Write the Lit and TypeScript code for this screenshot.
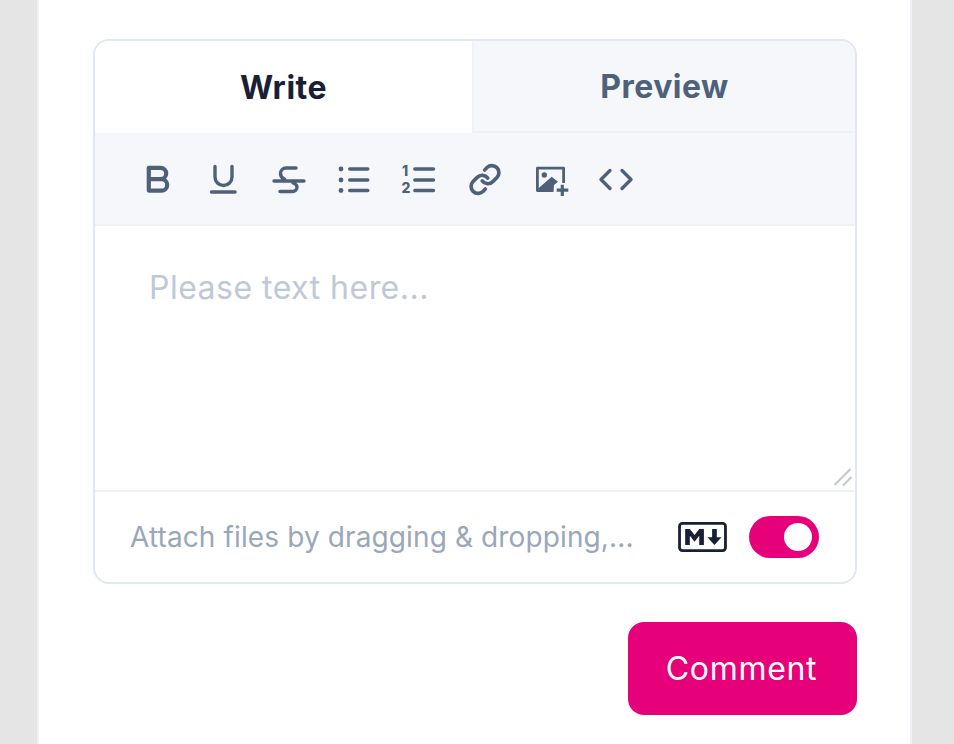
import { LitElement, html, css } from "lit";
import { customElement } from "lit/decorators.js";

@customElement("app-root")
export class AppRoot extends LitElement {
  static styles = css`
    :host { display: block; height: 744px; overflow: hidden; background: #e5e5e5; font-family: Inter, "Liberation Sans", sans-serif; }
    * { box-sizing: border-box; }
    .page { width: 875px; height: 744px; margin-left: 37px; background: #fff; border-left: 2px solid #edf2f7; border-right: 2px solid #edf2f7; padding: 39px 53px 0 54px; }
    .card { height: 545px; border: 2px solid #e2e8f0; border-radius: 16px; overflow: hidden; display: flex; flex-direction: column; }
    .tabs { display: flex; height: 92px; flex: none; }
    .tab { display: flex; align-items: center; justify-content: center; font-size: 32px; font-weight: 700; }
    .write { width: 377px; color: #1a1f36; background: #fff; letter-spacing: 0.5px; }
    .preview { flex: 1; color: #4f6179; background: #f5f7fb; border-left: 2px solid #edf2f7; border-bottom: 2px solid #edf2f7; letter-spacing: 0.45px; }
    .toolbar { height: 93px; flex: none; background: #f5f7fb; border-bottom: 2px solid #edf2f7; display: flex; align-items: center; gap: 25.5px; padding: 3px 0 0 42px; }
    .toolbar svg { width: 40px; height: 40px; flex: none; fill: none; stroke: #4f6179; stroke-width: 3.4; stroke-linecap: round; stroke-linejoin: round; }
    .toolbar .solid { fill: #4f6179; stroke: none; }
    .num { font-size: 14px; font-weight: 800; fill: #4f6179; stroke: none; }
    .editor { position: relative; flex: 1; border-bottom: 2px solid #edf2f7; }
    textarea { display: block; width: 100%; height: 100%; border: 0; outline: 0; resize: none; padding: 43px 54px; font: 400 32px/38px Inter, "Liberation Sans", sans-serif; letter-spacing: 0.48px; background: #fff; }
    textarea::placeholder { color: #c0c8d6; opacity: 1; }
    .grip { position: absolute; right: 0; bottom: 2px; width: 24px; height: 22px; }
    .grip path { stroke: #c0c8d6; stroke-width: 2; fill: none; }
    .footer { height: 90px; flex: none; display: flex; align-items: center; padding: 0 36px 0 35px; }
    .hint { flex: 1; font-size: 28px; color: #9aa7b9; white-space: nowrap; letter-spacing: 0.12px; }
    .md { width: 49px; height: 30px; flex: none; margin-right: 22px; }
    .toggle { width: 70px; height: 42px; flex: none; border-radius: 21px; background: #e6007a; display: flex; align-items: center; justify-content: flex-end; padding-right: 7px; }
    .knob { width: 28px; height: 28px; border-radius: 50%; background: #fff; }
    .actions { display: flex; justify-content: flex-end; margin-top: 38px; }
    button { width: 229px; height: 93px; border: 0; border-radius: 16px; padding: 0 2px 0 0; background: #e6007a; color: #fff; font: 400 32px Inter, "Liberation Sans", sans-serif; letter-spacing: 0.7px; }
  `;

  render() {
    return html`
      <div class="page">
        <div class="card">
          <div class="tabs">
            <div class="tab write">Write</div>
            <div class="tab preview">Preview</div>
          </div>
          <div class="toolbar">
            <svg viewBox="0 0 40 40"><path d="M11.8 7.8h11.7a5.6 5.6 0 0 1 0 11.4H11.8zM11.8 19.2h12.7a5.7 5.7 0 0 1 0 11.4H11.8z" stroke-width="4.2"/></svg>
            <svg viewBox="0 0 40 40"><path d="M12 6.5V17a8.5 8.5 0 0 0 17 0V6.5M8.5 32H32"/></svg>
            <svg viewBox="0 0 40 40"><path d="M6 21H36M28 8H18a5.5 5.5 0 0 0-5.5 5.5c0 2.5 1.5 4.5 4 5.5M25 23c2.2.7 4 2 4 4a4.5 4.5 0 0 1-4.5 4.5H12"/></svg>
            <svg viewBox="0 0 40 40"><path d="M15.7 9H33.8M15.7 20H33.8M15.7 30.5H33.8"/><circle class="solid" cx="7" cy="9" r="2.4"/><circle class="solid" cx="7" cy="20" r="2.4"/><circle class="solid" cx="7" cy="30.5" r="2.4"/></svg>
            <svg viewBox="0 0 40 40"><path d="M15.8 9H34.5M15.8 20H34.5M15.8 30.5H34.5"/><text class="num" x="3" y="16">1</text><text class="num" x="2.5" y="33">2</text></svg>
            <svg viewBox="0 0 40 40"><g transform="translate(3.2 2.7) scale(1.4)" stroke-width="2.6"><path d="M10 13a5 5 0 0 0 7.54.54l3-3a5 5 0 0 0-7.07-7.07l-1.72 1.71"/><path d="M14 11a5 5 0 0 0-7.54-.54l-3 3a5 5 0 0 0 7.07 7.07l1.71-1.71"/></g></svg>
            <svg viewBox="0 0 40 40"><path d="M33.6 23V8.2H7.4V30.6H23" stroke-width="2.8" stroke-linecap="butt" stroke-linejoin="round"/><circle class="solid" cx="14.3" cy="15" r="2.7"/><path class="solid" d="M7 31V29.5L21.7 16.7L28 21.7L24 25L23.5 32H7z"/><path d="M32.3 24.8V36M26.7 30.2H38.3" stroke-width="3.2" stroke-linecap="butt"/></svg>
            <svg viewBox="0 0 40 40"><path d="M14 10.5L5 19.5L14 28.5M26 10.5L35 19.5L26 28.5"/></svg>
          </div>
          <div class="editor">
            <textarea placeholder="Please text here..."></textarea>
            <svg class="grip" viewBox="0 0 24 22"><path d="M3.5 19L19.5 3M12 19.5L20.5 11"/></svg>
          </div>
          <div class="footer">
            <div class="hint">Attach files by dragging &amp; dropping,...</div>
            <svg class="md" viewBox="0 0 208 128"><rect x="6" y="6" width="196" height="116" rx="12" fill="none" stroke="#1a1f36" stroke-width="12"/><path fill="#1a1f36" d="M30 98V30h20l20 25 20-25h20v68H90V59L70 84 50 59v39zm125 0l-30-33h20V30h20v35h20z"/></svg>
            <div class="toggle"><div class="knob"></div></div>
          </div>
        </div>
        <div class="actions"><button>Comment</button></div>
      </div>
    `;
  }
}
